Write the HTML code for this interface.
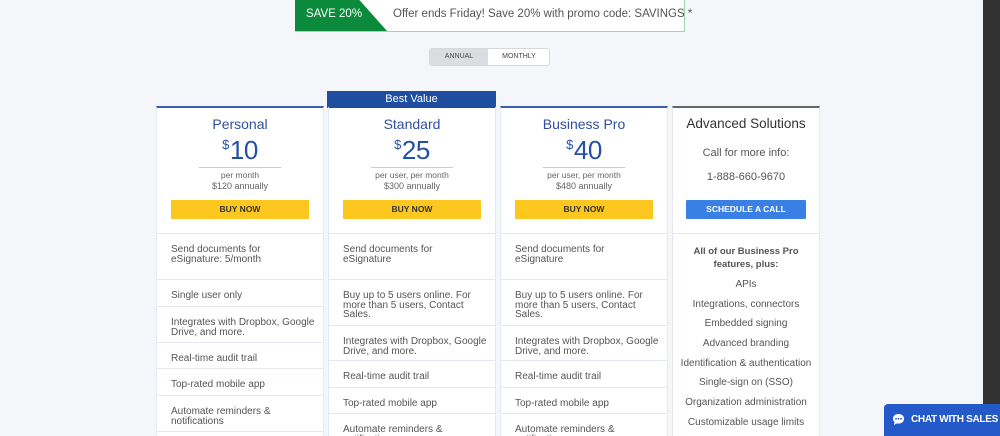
<!DOCTYPE html>
<html><head><meta charset="utf-8"><style>
*{margin:0;padding:0;box-sizing:border-box}
html,body{width:1000px;height:436px;overflow:hidden}
body{background:#f5f6f9;font-family:"Liberation Sans",sans-serif;position:relative;color:#555}
.a{position:absolute}
.card{position:absolute;top:106px;height:335px;background:#fff;border:1px solid #e3e8f1;border-top:2px solid #3b5fb0;overflow:hidden}
.head{height:126px;border-bottom:1px solid #e3e8f1;text-align:center;position:relative}
.title{position:absolute;top:8px;left:0;right:0;font-size:14px;color:#2f4f9e}
.price{position:absolute;top:27px;left:0;right:0;font-size:26px;color:#2450a8;letter-spacing:-0.5px}
.price sup{font-size:13px;vertical-align:10px;margin-right:1px}
.hr{position:absolute;top:59px;left:42px;right:42px;border-top:1px solid #c8cbd1}
.pm{position:absolute;top:62px;left:0;right:0;font-size:8.5px;color:#666}
.an{position:absolute;top:73px;left:0;right:0;font-size:9px;color:#666}
.btn{position:absolute;top:92px;left:14px;right:14px;height:19px;background:#fcc71f;border-radius:1px;font-size:8.5px;font-weight:bold;color:#333;line-height:19px}
.row{border-bottom:1px solid #e3e8f1;padding:11px 0 0 14px;font-size:10px;line-height:9.5px;color:#555}
.adv li{list-style:none;font-size:10px;height:19.7px;line-height:19.7px;color:#555}
</style></head><body>
<div class="a" style="left:295px;top:0;width:390px;height:32px;background:#fff;border:1px solid #9fd4ad;border-top:none"></div>
<div class="a" style="left:295px;top:0;width:92px;height:31px;background:#0b8a3b;clip-path:polygon(0 0,70% 0,100% 100%,0 100%)"></div>
<div class="a" style="left:306px;top:8px;font-size:11.5px;color:#fff">SAVE 20%</div>
<div class="a" style="left:393px;top:8px;font-size:11.5px;color:#555">Offer ends Friday! Save 20% with promo code: SAVINGS *</div>
<div class="a" style="left:429px;top:48px;width:121px;height:18px;border:1px solid #d6d8dc;border-radius:3px;background:#fff;overflow:hidden">
<div class="a" style="left:0;top:0;width:58px;height:16px;background:#dcdde0;font-size:7px;line-height:16px;text-align:center;color:#444">ANNUAL</div>
<div class="a" style="left:58px;top:0;width:62px;height:16px;font-size:7px;line-height:16px;text-align:center;color:#444">MONTHLY</div></div>
<div class="a" style="left:327px;top:91px;width:169px;height:17px;background:#1f4ea0;color:#fff;font-size:11px;text-align:center;line-height:17px">Best Value</div>

<div class="card" style="left:156px;width:168px">
<div class="head"><div class="title">Personal</div><div class="price"><sup>$</sup>10</div><div class="hr"></div><div class="pm">per month</div><div class="an">$120 annually</div><div class="btn">BUY NOW</div></div>
<div class="row" style="height:46px">Send documents for<br>eSignature: 5/month</div>
<div class="row" style="height:27px">Single user only</div>
<div class="row" style="height:36px">Integrates with Dropbox, Google<br>Drive, and more.</div>
<div class="row" style="height:26px">Real-time audit trail</div>
<div class="row" style="height:27px">Top-rated mobile app</div>
<div class="row" style="height:36px">Automate reminders &amp;<br>notifications</div>
</div>

<div class="card" style="left:328px;width:168px;border-top-color:#1f4ea0">
<div class="head"><div class="title">Standard</div><div class="price"><sup>$</sup>25</div><div class="hr"></div><div class="pm">per user, per month</div><div class="an">$300 annually</div><div class="btn">BUY NOW</div></div>
<div class="row" style="height:46px">Send documents for<br>eSignature</div>
<div class="row" style="height:46px">Buy up to 5 users online. For<br>more than 5 users, Contact<br>Sales.</div>
<div class="row" style="height:35px">Integrates with Dropbox, Google<br>Drive, and more.</div>
<div class="row" style="height:27px">Real-time audit trail</div>
<div class="row" style="height:26px">Top-rated mobile app</div>
<div class="row" style="height:36px">Automate reminders &amp;<br>notifications</div>
</div>

<div class="card" style="left:500px;width:168px">
<div class="head"><div class="title">Business Pro</div><div class="price"><sup>$</sup>40</div><div class="hr"></div><div class="pm">per user, per month</div><div class="an">$480 annually</div><div class="btn">BUY NOW</div></div>
<div class="row" style="height:46px">Send documents for<br>eSignature</div>
<div class="row" style="height:46px">Buy up to 5 users online. For<br>more than 5 users, Contact<br>Sales.</div>
<div class="row" style="height:35px">Integrates with Dropbox, Google<br>Drive, and more.</div>
<div class="row" style="height:27px">Real-time audit trail</div>
<div class="row" style="height:26px">Top-rated mobile app</div>
<div class="row" style="height:36px">Automate reminders &amp;<br>notifications</div>
</div>

<div class="card" style="left:672px;width:148px;border-top-color:#666">
<div class="head"><div class="title" style="color:#333;font-size:13.5px">Advanced Solutions</div>
<div class="a" style="top:39px;left:0;right:0;font-size:11px">Call for more info:</div>
<div class="a" style="top:63px;left:0;right:0;font-size:11px">1-888-660-9670</div>
<div class="btn" style="background:#3a80e4;color:#fff;left:13px;right:13px">SCHEDULE A CALL</div></div>
<div style="text-align:center;font-size:9.5px;font-weight:bold;color:#555;line-height:13px;padding-top:11px">All of our Business Pro<br>features, plus:</div>
<ul class="adv" style="text-align:center;padding-top:4px">
<li>APIs</li><li>Integrations, connectors</li><li>Embedded signing</li><li>Advanced branding</li><li>Identification &amp; authentication</li><li>Single-sign on (SSO)</li><li>Organization administration</li><li>Customizable usage limits</li></ul>
</div>

<div class="a" style="left:983px;top:0;width:17px;height:436px;background:#323232"></div>
<div class="a" style="left:884px;top:404px;width:116px;height:32px;background:#2359c9;border-radius:4px 0 0 0;color:#fff;font-size:10px;font-weight:bold;line-height:32px;padding-left:27px;letter-spacing:-0.3px;white-space:nowrap">CHAT WITH SALES</div>
<svg class="a" style="left:892px;top:413px" width="13" height="13" viewBox="0 0 13 13"><path d="M6.5 1C3.2 1 1 3 1 5.7c0 1.4.6 2.5 1.6 3.3L2 12l3-1.6c.5.1 1 .2 1.5.2 3.3 0 5.5-2 5.5-4.8S9.8 1 6.5 1z" fill="#fff"/><circle cx="4" cy="5.8" r=".9" fill="#2359c9"/><circle cx="6.5" cy="5.8" r=".9" fill="#2359c9"/><circle cx="9" cy="5.8" r=".9" fill="#2359c9"/></svg>
</body></html>
